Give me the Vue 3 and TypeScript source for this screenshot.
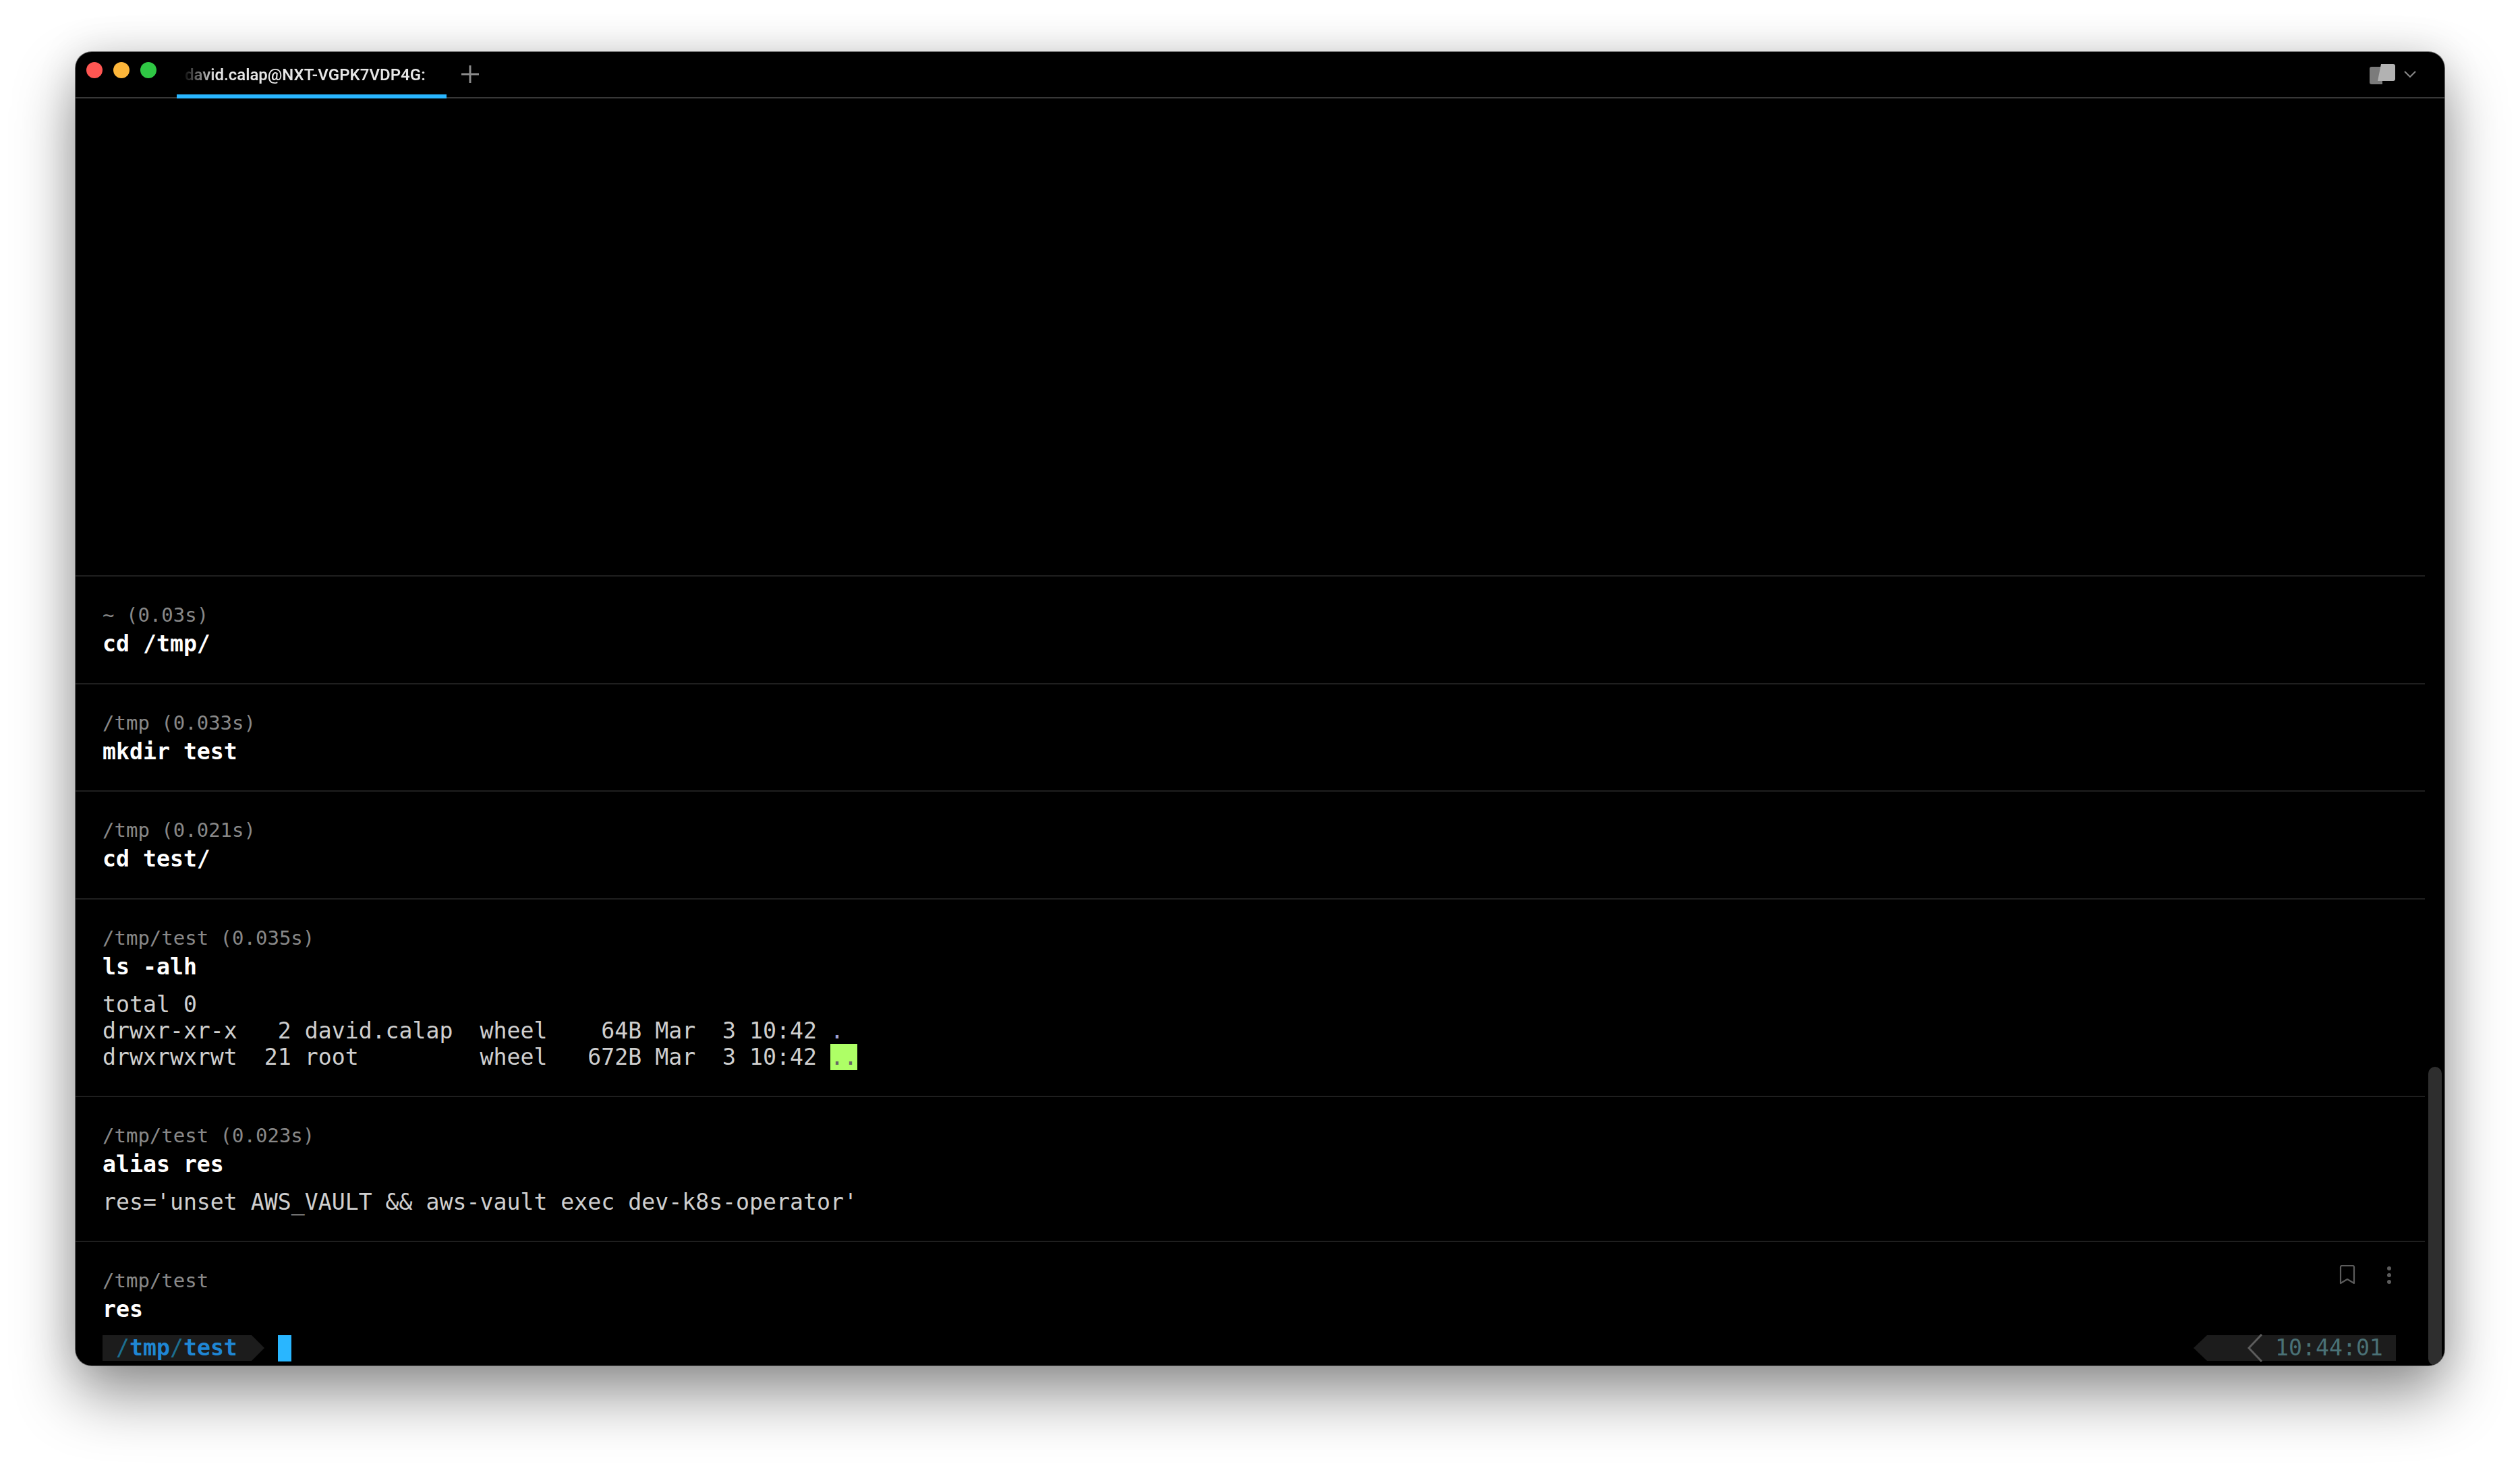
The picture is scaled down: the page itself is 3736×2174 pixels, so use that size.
<script setup lang="ts">
interface Block { head: string; cmd: string; out?: string[]; listing?: boolean }
const blocks: Block[] = [
  { head: '~ (0.03s)', cmd: 'cd /tmp/' },
  { head: '/tmp (0.033s)', cmd: 'mkdir test' },
  { head: '/tmp (0.021s)', cmd: 'cd test/' },
  { head: '/tmp/test (0.035s)', cmd: 'ls -alh', listing: true },
  { head: '/tmp/test (0.023s)', cmd: 'alias res', out: ["res='unset AWS_VAULT && aws-vault exec dev-k8s-operator'"] },
]
const rowOne = 'drwxr-xr-x   2 david.calap  wheel    64B Mar  3 10:42 '
const rowTwo = 'drwxrwxrwt  21 root         wheel   672B Mar  3 10:42 '
</script>

<template>
  <div class="page">
    <div class="window">
      <header class="tabbar">
        <div class="lights">
          <span class="light red"></span>
          <span class="light yellow"></span>
          <span class="light green"></span>
        </div>
        <div class="tab"><span class="tab-title">david.calap@NXT-VGPK7VDP4G:</span></div>
        <svg class="plus" width="26" height="26" viewBox="0 0 26 26"><path d="M13 0V26M0 13H26" stroke="#8a8a8a" stroke-width="3" /></svg>
        <div class="spacer"></div>
        <svg class="panes" width="40" height="31" viewBox="0 0 40 31">
          <path d="M4 4H20V30H4a3 3 0 0 1-3-3V7a3 3 0 0 1 3-3Z" fill="#7b7b7b" />
          <path d="M18 0H36a3 3 0 0 1 3 3V22a3 3 0 0 1-3 3H13Z" fill="#b2b2b2" />
        </svg>
        <svg class="chev" width="18" height="10" viewBox="0 0 18 10"><path d="M1 1L9 9L17 1" fill="none" stroke="#8a8a8a" stroke-width="2" /></svg>
      </header>
      <main class="content">
        <section v-for="b in blocks" :key="b.cmd" class="block">
          <div class="head">{{ b.head }}</div>
          <div class="cmd">{{ b.cmd }}</div>
          <div v-if="b.out" class="out">
            <div v-for="l in b.out" :key="l" class="line">{{ l }}</div>
          </div>
          <div v-if="b.listing" class="out">
            <div class="line">total 0</div>
            <div class="line">{{ rowOne }}<span class="dot">.</span></div>
            <div class="line">{{ rowTwo }}<span class="hl">..</span></div>
          </div>
        </section>
        <section class="block last">
          <div class="head">/tmp/test</div>
          <div class="cmd">res</div>
          <div class="actions">
            <svg width="24" height="30" viewBox="0 0 24 30"><path d="M2 3a2 2 0 0 1 2-2H20a2 2 0 0 1 2 2V27L12 21L2 27Z" fill="none" stroke="#5c5c5c" stroke-width="2.2" stroke-linejoin="round" /></svg>
            <svg width="8" height="28" viewBox="0 0 8 28"><circle cx="4" cy="4" r="3" fill="#5c5c5c" /><circle cx="4" cy="14" r="3" fill="#5c5c5c" /><circle cx="4" cy="24" r="3" fill="#5c5c5c" /></svg>
          </div>
        </section>
        <footer class="prompt">
          <div class="path"><span class="path-text"><i>/</i>tmp<i>/</i>test</span><span class="arrow-r"></span></div>
          <span class="cursor"></span>
          <div class="spacer"></div>
          <div class="clock">
            <span class="arrow-l"></span>
            <div class="clock-body">
              <svg class="clock-chev" width="24" height="42" viewBox="0 0 24 42"><path d="M22 1L3 21L22 41" fill="none" stroke="#5c5c5c" stroke-width="3" /></svg>
              <span class="time">10:44:01</span>
            </div>
          </div>
        </footer>
      </main>
      <div class="scrollbar"></div>
    </div>
  </div>
</template>

<style scoped>
.page {
  width: 3736px;
  height: 2174px;
  box-sizing: border-box;
  padding: 77px 112px 149px 112px;
  background: #fff;
  overflow: hidden;
}
.window {
  position: relative;
  height: 100%;
  display: flex;
  flex-direction: column;
  background: #000;
  border-radius: 24px;
  box-shadow: 0 0 0 1px rgba(70, 70, 70, 0.7), 0 44px 90px rgba(0, 0, 0, 0.42), 0 0 60px rgba(0, 0, 0, 0.12);
  overflow: hidden;
  font-family: "DejaVu Sans Mono", monospace;
}
.tabbar {
  height: 69px;
  flex: none;
  box-sizing: border-box;
  display: flex;
  align-items: flex-start;
  border-bottom: 2px solid #383838;
  padding-left: 16px;
}
.lights {
  display: flex;
  gap: 16px;
  padding-top: 15px;
}
.light {
  width: 24px;
  height: 24px;
  border-radius: 50%;
}
.red { background: #ff5652; }
.yellow { background: #fdb63a; }
.green { background: #2fc744; }
.tab {
  width: 400px;
  height: 69px;
  margin-left: 30px;
  box-sizing: border-box;
  border-bottom: 6px solid #29b6ff;
  padding: 18px 0 0 12px;
  flex: none;
}
.tab-title {
  font-family: Roboto, sans-serif;
  font-weight: 600;
  font-size: 24px;
  line-height: 32px;
  white-space: nowrap;
  color: transparent;
  background: linear-gradient(90deg, #111 0, #e6e6e6 45px);
  -webkit-background-clip: text;
  background-clip: text;
}
.plus { margin: 20px 0 0 22px; flex: none; }
.spacer { flex: 1; }
.panes { margin-top: 18px; flex: none; }
.chev { margin: 28px 42px 0 12px; flex: none; }
.content {
  flex: 1;
  min-height: 0;
  display: flex;
  flex-direction: column;
  justify-content: flex-end;
  padding-bottom: 6px;
}
.block {
  position: relative;
  margin-right: 29px;
  padding: 38px 0 36.67px 40px;
  border-top: 2px solid #1f1f1f;
}
.head {
  font-size: 29px;
  line-height: 39px;
  color: #888;
  white-space: pre;
}
.cmd {
  margin-top: 2px;
  font-size: 33.2px;
  line-height: 42px;
  font-weight: 700;
  color: #fff;
  white-space: pre;
}
.out {
  margin-top: 16.5px;
  margin-bottom: 0.7px;
}
.line {
  font-size: 33.2px;
  line-height: 38.6px;
  color: #cfcfcf;
  white-space: pre;
}
.dot { color: #a3a3d6; }
.hl {
  background: #aeff66;
  color: #666;
}
.last { padding-bottom: 16px; }
.actions {
  position: absolute;
  top: 34px;
  right: 49px;
  display: flex;
  align-items: center;
  gap: 46px;
}
.prompt {
  display: flex;
  align-items: center;
  height: 40px;
  padding-left: 40px;
  padding-right: 72px;
}
.path {
  display: flex;
  align-items: center;
}
.path-text {
  height: 38px;
  width: 221px;
  box-sizing: border-box;
  padding-left: 20px;
  background: #1c1c1c;
  font-size: 33.2px;
  line-height: 38px;
  font-weight: 700;
  color: #1f86d4;
}
.path-text i {
  font-style: normal;
  font-weight: 400;
  color: #1c6f90;
}
.arrow-r {
  width: 0;
  height: 0;
  border-left: 19px solid #1c1c1c;
  border-top: 19px solid transparent;
  border-bottom: 19px solid transparent;
}
.cursor {
  width: 20px;
  height: 39px;
  margin-left: 20px;
  background: #29b6ff;
}
.clock {
  display: flex;
  align-items: center;
}
.arrow-l {
  width: 0;
  height: 0;
  border-right: 20px solid #1c1c1c;
  border-top: 19px solid transparent;
  border-bottom: 19px solid transparent;
}
.clock-body {
  position: relative;
  width: 280px;
  height: 38px;
  background: #1c1c1c;
  box-sizing: border-box;
  padding-left: 101px;
}
.clock-chev {
  position: absolute;
  left: 59px;
  top: -2px;
}
.time {
  font-size: 33.2px;
  line-height: 38px;
  color: #4a7176;
}
.scrollbar {
  position: absolute;
  right: 4px;
  bottom: 0;
  width: 20px;
  height: 443px;
  border-radius: 10px;
  background: #2e2e2e;
}
</style>
